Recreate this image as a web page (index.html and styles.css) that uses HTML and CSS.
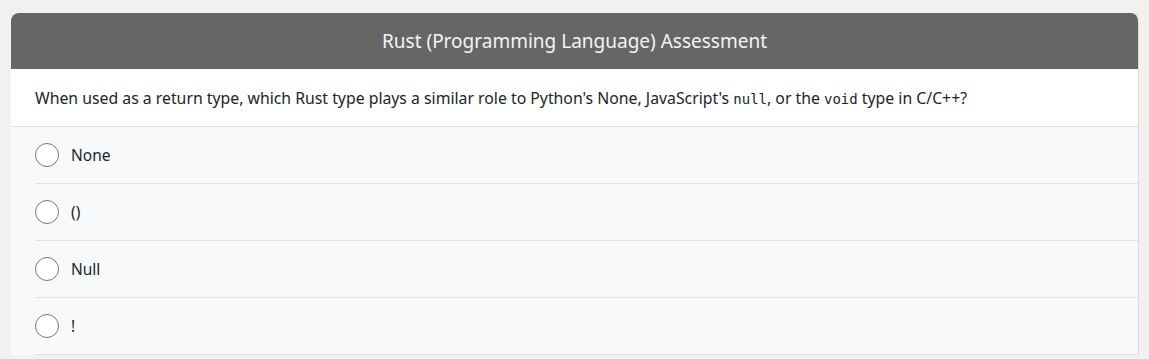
FILE: index.html
```html
<!DOCTYPE html>
<html lang="en">
<head>
    <meta charset="UTF-8">
    <meta name="viewport" content="width=device-width, initial-scale=1.0">
    <title>Rust Assessment</title>
    <link rel="stylesheet" href="styles.css">
</head>
<body>
    <div class="quiz-card">
        <div class="quiz-header">Rust (Programming Language) Assessment</div>
        <div class="question">
            <p>When used as a return type, which Rust type plays a similar role to Python's None, JavaScript's <code>null</code>, or the <code>void</code> type in C/C++?</p>
        </div>
        <ul class="options">
            <li class="option"><label><input type="radio" name="answer" value="none"><span>None</span></label></li>
            <li class="option"><label><input type="radio" name="answer" value="unit"><span>()</span></label></li>
            <li class="option"><label><input type="radio" name="answer" value="null"><span>Null</span></label></li>
            <li class="option"><label><input type="radio" name="answer" value="never"><span>!</span></label></li>
        </ul>
    </div>
</body>
</html>
```

FILE: styles.css
```css
:root {
    --page-bg: #f2f1ef;
    --header-bg: #666666;
    --option-bg: #f8f9fa;
    --line-color: #e2e3e5;
    --text-color: #212529;
}
* {
    margin: 0;
    padding: 0;
    box-sizing: border-box;
}
body {
    font-family: 'Noto Sans', 'Open Sans', sans-serif;
    background-color: var(--page-bg);
    color: var(--text-color);
    padding: 13px 10px 0 11px;
}
.quiz-card {
    background-color: var(--option-bg);
    border-radius: 8px 8px 0 0;
    border-right: 1px solid #dcdcdc;
    overflow: hidden;
}
.quiz-header {
    height: 56px;
    background-color: var(--header-bg);
    color: #f4f4f4;
    font-size: 19px;
    display: flex;
    align-items: center;
    justify-content: center;
}
.question {
    height: 58px;
    background-color: #ffffff;
    border-bottom: 1px solid var(--line-color);
    padding: 0 24px;
    font-size: 15.8px;
    display: flex;
    align-items: center;
}
.question code {
    font-family: 'DejaVu Sans Mono', monospace;
    font-size: 14px;
}
.options {
    list-style: none;
    padding-left: 24px;
}
.option {
    height: 57px;
    border-bottom: 1px solid var(--line-color);
}
.option label {
    height: 100%;
    display: flex;
    align-items: center;
    gap: 12px;
    font-size: 15.5px;
    cursor: pointer;
}
.option input[type="radio"] {
    appearance: none;
    width: 24px;
    height: 24px;
    border: 1px solid #777;
    border-radius: 50%;
    background-color: #fff;
    margin: 0;
    cursor: pointer;
}
.option input[type="radio"]:checked {
    border: 7px solid #666;
}
```
